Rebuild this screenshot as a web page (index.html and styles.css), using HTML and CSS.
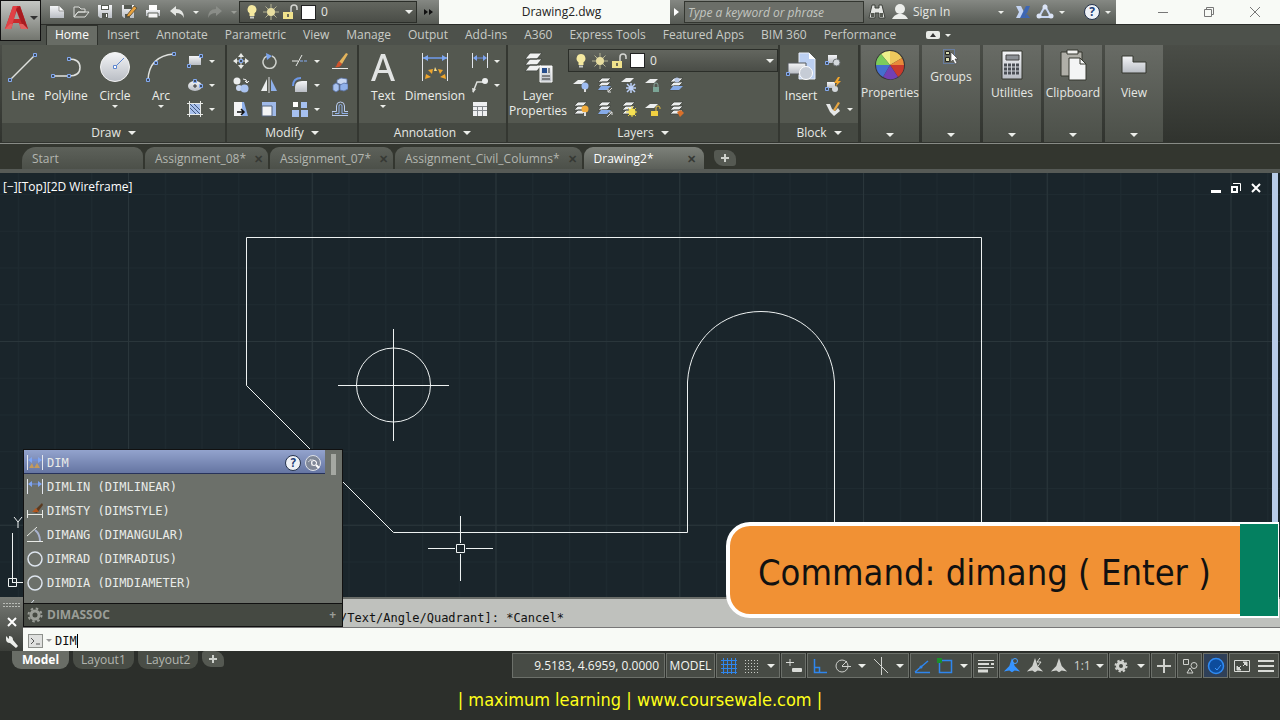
FILE: index.html
```html
<!DOCTYPE html>
<html lang="en">
<head>
    <meta charset="UTF-8">
    <title>Drawing2.dwg</title>
    <link rel="stylesheet" href="styles.css">
</head>
<body>
<svg class="defs" width="0" height="0">
    <defs>
        <linearGradient id="silver" x1="0" y1="0" x2="0" y2="1"><stop offset="0" stop-color="#f4f5f7"/><stop offset="1" stop-color="#b9bdc4"/></linearGradient>
        <symbol id="bulb" viewBox="0 0 16 16"><path d="M8 1a4.500 4.500 0 0 0-2.500 8.200V12h5V9.200A4.500 4.500 0 0 0 8 1z" fill="#f5e9a0"/><path d="M6 12.500h4v2H6z" fill="#c9cbc6"/></symbol>
        <symbol id="sun" viewBox="0 0 16 16"><path d="M8 0v16M0 8h16M2.500 2.500l11 11M13.500 2.500l-11 11" stroke="#b5b493"/><circle cx="8" cy="8" r="4" fill="#e8dea0"/></symbol>
        <symbol id="unlock" viewBox="0 0 16 16"><path d="M9 8V4q0-3 3-3t3 3v2" fill="none" stroke="#d5d6d2" stroke-width="1.500"/><path d="M1 8h10v7H1z" fill="#f0e28c"/><path d="M6 10v3" stroke="#444" stroke-width="1.500"/></symbol>
        <symbol id="sheets" viewBox="0 0 16 16"><path d="M5 1h9l-4 4H1zM5 5h9l-4 4H1zM5 9h9l-4 4H1z" fill="#eceeee" stroke="#41453f" stroke-width=".8"/></symbol>
        <symbol id="dimlines" viewBox="0 0 16 16"><path d="M.5 0v15M15.500 0v15" stroke="#e4e7ee"/><path d="M2 5h12" stroke="#6a8fe8"/><path d="M1 5l4-3v6zM15 5l-4-3v6z" fill="#7fa5f0"/></symbol>
        <symbol id="person" viewBox="0 0 20 20"><path d="M10 1l3 9 6 6-6-1-3 2-3-2-6 1 6-6z" fill="currentColor"/></symbol>
    </defs>
</svg>

<header class="titlebar">
    <button class="app-button" aria-label="Application menu">
        <svg width="26" height="28" viewBox="0 0 26 28"><path d="M1 25L9 2h7l8 23h-7l-2-6H9l-2 6z" fill="#c92a2c"/><path d="M9 2h4l-3 13-3 10H1z" fill="#e04145"/><path d="M16 2l8 23h-4L12 5z" fill="#a81b20"/><path d="M10 15l2.500-8 3 8z" fill="#a3a6a2"/><path d="M1 25l5-5h3l-2 5zM24 25l-5-5h-4l2 5z" fill="#e2605f"/></svg>
        <i class="caret dark"></i>
    </button>
    <div class="quick">
        <button aria-label="New"><svg width="18" height="16"><path d="M2 2h9l5 5v7H2z" fill="url(#silver)"/><path d="M11 2v5h5" fill="#fff" stroke="#999"/></svg></button>
        <button aria-label="Open"><svg width="18" height="16"><path d="M2 13V3h5l2 2h4v3H6zM2 13l4-5h11l-4 5z" fill="#666963" stroke="#dcdedb"/></svg></button>
        <button aria-label="Save"><svg width="18" height="16"><path d="M2 1h14v13H4l-2-2z" fill="url(#silver)"/><path d="M5 1h8v5H5zM6 9h6v5H6z" fill="#555952"/><path d="M6 2h6v3H6zM10 10h1v3h-1z" fill="#fff"/></svg></button>
        <button aria-label="Save as"><svg width="18" height="16"><path d="M2 1h12v13H4l-2-2z" fill="url(#silver)"/><path d="M4 1h8v4H4zM5 10h5v4H5z" fill="#555952"/><path d="M7 11l7-9 3 2-7 8-3 1z" fill="#e9a23e" stroke="#504632" stroke-width=".8"/></svg></button>
        <button aria-label="Plot"><svg width="18" height="16"><path d="M5 1h8v5H5z" fill="#fff"/><path d="M2 6h14v6H2z" fill="url(#silver)"/><path d="M4 9h10v5H4z" fill="#f4f4f4" stroke="#5e625b"/></svg></button>
        <button aria-label="Undo"><svg width="18" height="16"><path d="M2 7l6-5v3q8 0 8 9-2-5-8-5v3z" fill="#e4e6e3"/></svg></button>
        <i class="caret"></i>
        <button aria-label="Redo"><svg width="18" height="16"><path d="M16 7l-6-5v3q-8 0-8 9 2-5 8-5v3z" fill="#8a8d88"/></svg></button>
        <i class="caret dim"></i>
    </div>
    <div class="layer-box quick-layer">
        <svg width="16" height="16"><use href="#bulb"/></svg>
        <svg width="16" height="16"><use href="#sun"/></svg>
        <svg width="16" height="16"><use href="#unlock"/></svg>
        <i class="swatch"></i>
        <select aria-label="Current layer"><option>0</option></select>
        <i class="caret wide"></i>
    </div>
    <button class="more" aria-label="More tools"><svg width="9" height="8"><path d="M0 1l4 3-4 3zM5 1l4 3-4 3z" fill="#111"/></svg></button>
    <h1>Drawing2.dwg</h1>
    <button class="search-toggle" aria-label="Toggle search"><svg width="6" height="10"><path d="M0 1l5 4-5 4z" fill="#fff"/></svg></button>
    <input class="search" type="text" aria-label="Search" placeholder="Type a keyword or phrase">
    <div class="account">
        <button aria-label="Find"><svg width="18" height="18"><path d="M4 2h3v3h4V2h3l3 13h-6v-5H7v5H1z" fill="#e4e6e3" stroke="#3d403b"/><path d="M3 10h3v4H3zM12 10h3v4h-3z" fill="#555952"/></svg></button>
        <button class="sign-in"><svg width="18" height="18"><circle cx="9" cy="6" r="5" fill="#eceeeb"/><path d="M1 16q2-4 6-5h4q4 1 6 5z" fill="#eceeeb"/></svg>Sign In</button>
        <i class="caret"></i>
        <button class="exchange" aria-label="Exchange"><svg width="16" height="16"><path d="M1 2h5l3 6-3 6H1l3-6z" fill="#c3d3f2"/><path d="M15 2h-4L5 14h5zM11 9l4 5h-5z" fill="#3d66b4"/></svg></button>
        <button aria-label="A360"><svg width="18" height="16"><path d="M9 2l6 11H3z" fill="none" stroke="#c7d6f3" stroke-width="2"/><circle cx="9" cy="3" r="2.500" fill="#dbe4f6"/><circle cx="3" cy="12" r="2.500" fill="#dbe4f6"/><circle cx="15" cy="12" r="2.500" fill="#dbe4f6"/></svg></button>
        <i class="caret"></i>
        <button class="help" aria-label="Help">?</button>
        <i class="caret"></i>
    </div>
    <div class="window-buttons">
        <button aria-label="Minimize"><svg width="12" height="12"><path d="M1 6.500h10" stroke="#777"/></svg></button>
        <button aria-label="Restore"><svg width="12" height="12"><path d="M1.500 3.500h7v7h-7zM3.500 3.500v-2h7v7h-2" fill="none" stroke="#777"/></svg></button>
        <button aria-label="Close"><svg width="12" height="12"><path d="M1 1l10 10M11 1L1 11" stroke="#777"/></svg></button>
    </div>
</header>

<nav class="menu">
    <a class="active" href="#">Home</a><a href="#">Insert</a><a href="#">Annotate</a><a href="#">Parametric</a><a href="#">View</a><a href="#">Manage</a><a href="#">Output</a><a href="#">Add-ins</a><a href="#">A360</a><a href="#">Express Tools</a><a href="#">Featured Apps</a><a href="#">BIM 360</a><a href="#">Performance</a>
    <button class="ribbon-toggle" aria-label="Minimize ribbon"><svg width="14" height="8"><rect width="14" height="8" rx="2" fill="#e8eae6"/><path d="M4 6l3-4 3 4z" fill="#333"/></svg><i class="caret"></i></button>
</nav>

<div class="ribbon">
    <section class="panel draw">
        <div class="tools">
            <button class="big w42"><svg width="32" height="32"><path d="M3 29L28 4" stroke="#dfe1de" stroke-width="1.500"/><path d="M1.500 27.500h3v3h-3zM26.500 2.500h3v3h-3z" fill="#3d4a5e" stroke="#84aaf0"/></svg>Line</button>
            <button class="big w46"><svg width="32" height="32"><path d="M3 25h16q11 0 11-8.500T19 8" fill="none" stroke="#dfe1de" stroke-width="1.500"/><path d="M1.500 23.500h3v3h-3zM17.500 23.500h3v3h-3zM17.500 6.500h3v3h-3z" fill="#3d4a5e" stroke="#84aaf0"/></svg>Polyline</button>
            <button class="big w54"><svg width="32" height="32"><circle cx="16" cy="16" r="14.500" fill="url(#silver)" stroke="#f4f4f4"/><path d="M16 16l9-9" stroke="#5d86cf"/><path d="M14.500 14.500h3v3h-3z" fill="#fff" stroke="#5d86cf"/></svg>Circle<i class="caret"></i></button>
            <button class="big w38"><svg width="32" height="32"><path d="M3 29Q4 5 29 3" fill="none" stroke="#dfe1de" stroke-width="1.500"/><path d="M1.500 27.500h3v3h-3zM9.500 10.500h3v3h-3zM27.500 1.500h3v3h-3z" fill="#3d4a5e" stroke="#84aaf0"/></svg>Arc<i class="caret"></i></button>
            <div class="small-grid two">
                <button aria-label="Rectangle"><svg width="16" height="16"><path d="M2 3h12v9H2z" fill="url(#silver)"/><path d="M.500 11.500h3v3h-3zM12.500 1.500h3v3h-3z" fill="#3d4a5e" stroke="#84aaf0"/></svg></button><i class="caret"></i>
                <button aria-label="Ellipse"><svg width="16" height="16"><ellipse cx="8" cy="9" rx="7" ry="5" fill="url(#silver)"/><path d="M8 7v4M6 9h4" stroke="#333"/><path d="M6.500 2.500h3v3h-3zM12.500 7.500h3v3h-3z" fill="#3d4a5e" stroke="#84aaf0"/></svg></button><i class="caret"></i>
                <button aria-label="Hatch"><svg width="16" height="16"><path d="M3 3h10v10H3z" fill="#a8c0ec"/><path d="M3 7l6 6M3 3l10 10M7 3l6 6" stroke="#41587c"/><path d="M0 2.500h16M0 13.500h16M2.500 0v16M13.500 0v16" stroke="#e8eae6"/></svg></button><i class="caret"></i>
            </div>
        </div>
        <button class="panel-title">Draw<i class="caret wide"></i></button>
    </section>

    <section class="panel modify">
        <div class="tools">
            <div class="small-grid five">
                <button aria-label="Move"><svg width="16" height="16"><path d="M8 0l3 4H5zM8 16l-3-4h6zM0 8l4-3v6zM16 8l-4 3V5z" fill="#e9ebe8"/><path d="M8 2v12M2 8h12" stroke="#e9ebe8"/><path d="M6.500 6.500h3v3h-3z" fill="#3d4a5e" stroke="#84aaf0"/></svg></button>
                <button aria-label="Rotate"><svg width="16" height="16"><path d="M11 3a6.500 6.500 0 1 1-5 0" fill="none" stroke="#cfd2cd" stroke-width="1.500"/><path d="M5 0l6 3-5 4z" fill="#7aa4ee"/></svg></button>
                <button class="pad" aria-label="Trim"><svg width="16" height="16"><path d="M0 8h6M4 13L10 2" stroke="#e9ebe8"/><path d="M8 8h8" stroke="#84aaf0" stroke-dasharray="3 1"/></svg></button><i class="caret"></i>
                <button aria-label="Erase"><svg width="16" height="16"><path d="M7 9l7-9 2 1-6 10z" fill="#e3b45c"/><path d="M7 8l3 3q-2 4-7 3 2-1 2-3z" fill="#d0532c"/><path d="M0 15.500h16" stroke="#e9ebe8"/></svg></button>
                <button aria-label="Copy"><svg width="16" height="16"><circle cx="4" cy="4" r="3.500" fill="#eceeee"/><circle cx="6" cy="11" r="3" fill="#c9d6ee"/><circle cx="11.500" cy="11.500" r="4" fill="#a9c2ee"/><path d="M10 2q4 0 4 3m-2-1l2 2 2-2" fill="none" stroke="#eee"/></svg></button>
                <button aria-label="Mirror"><svg width="16" height="16"><path d="M6 2v12H0z" fill="#eceeee"/><path d="M10 2v12h6z" fill="#8fb0ea"/><path d="M8 0v16" stroke="#ddd"/></svg></button>
                <button class="pad" aria-label="Fillet"><svg width="16" height="16"><path d="M3 15V10q0-6 7-6h5v11z" fill="url(#silver)"/><path d="M1 9Q1 1 9 1" fill="none" stroke="#6e98e6" stroke-width="2"/></svg></button><i class="caret"></i>
                <button aria-label="Explode"><svg width="16" height="16"><path d="M5 3l4-2 6 1v4l-5 2-5-2z" fill="#c8d7f2" stroke="#5b74a8" stroke-width=".8"/><path d="M1 8l3-2 3 2v5l-3 2-3-2z" fill="#a9c2ee" stroke="#5b74a8" stroke-width=".8"/><path d="M8 8l4-2 4 1v5l-4 2-4-1z" fill="#8fb0ea" stroke="#5b74a8" stroke-width=".8"/></svg></button>
                <button aria-label="Stretch"><svg width="16" height="16"><path d="M1 1h8v14H1z" fill="#f3f4f5"/><path d="M9 1h2l4 14H9z" fill="#8fb0ea"/><path d="M4 11h7m-3-3l3 3-3 3" fill="none" stroke="#111" stroke-width="1.500"/></svg></button>
                <button aria-label="Scale"><svg width="16" height="16"><path d="M1 1h14v14H1z" fill="#9fb9e8"/><path d="M1 5h10v10H1z" fill="#f3f4f5" stroke="#53627c"/></svg></button>
                <button class="pad" aria-label="Array"><svg width="16" height="16"><path d="M1 1h5v5H1z" fill="#fff"/><path d="M9 1h6v6H9zM0 9h7v7H0zM9 9h7v7H9z" fill="#a5c0f0"/></svg></button><i class="caret"></i>
                <button aria-label="Offset"><svg width="16" height="16"><path d="M0 14.500h16M16 10.500h-3.500V5q0-4-4-4t-4 4v5.500H0V14" fill="none" stroke="#b9cbee"/><path d="M3 12.500h4V5q0-1.500 1.500-1.500T10 5v7.500h6" fill="none" stroke="#8fb0ea"/></svg></button>
            </div>
        </div>
        <button class="panel-title">Modify<i class="caret wide"></i></button>
    </section>

    <section class="panel annotation">
        <div class="tools">
            <button class="big w48"><svg width="32" height="32"><path d="M4 30L14 3h4l10 27h-4l-3-8H11l-3 8zM12 19h8L16 7z" fill="#e2e4e3"/></svg>Text<i class="caret"></i></button>
            <button class="big w56"><svg width="32" height="32"><path d="M3.500 2v28M28.500 2v28" stroke="#e4e6ea"/><path d="M4 7h24" stroke="#6f9bec" stroke-width="1.500"/><path d="M4 7l5-3v6zM28 7l-5-3v6z" fill="#7fa8f2"/><path d="M6 28l1-5 5 3zM9 19l5-1-1 5zM19 18l5 1-3 4zM21 26l5-3 1 5z" fill="#f0a62c"/><path d="M15 20l1-4 2 4z" fill="#ffe28a"/></svg>Dimension</button>
            <div class="small-grid two narrow">
                <button aria-label="Linear dimension"><svg width="16" height="16"><use href="#dimlines"/></svg></button><i class="caret"></i>
                <button aria-label="Leader"><svg width="16" height="16"><path d="M1 15L5 5h7" fill="none" stroke="#dfe1de" stroke-width="1.500"/><path d="M0 11l4 1-3 4z" fill="#dfe1de"/><circle cx="13" cy="4" r="3" fill="#eceeee"/></svg></button><i class="caret"></i>
                <button aria-label="Table"><svg width="16" height="16"><path d="M1 1h14v14H1z" fill="#eff0f1"/><path d="M1 5.500h14M1 9.500h14M5.500 5v10M10.500 5v10" stroke="#84888c"/></svg></button>
            </div>
        </div>
        <button class="panel-title">Annotation<i class="caret wide"></i></button>
    </section>

    <section class="panel layers">
        <div class="tools">
            <button class="big w60"><svg width="32" height="32"><path d="M8 2h12l-5 6H3zM8 8h12l-5 6H3zM8 14h12l-5 6H3z" fill="#f0f1f1" stroke="#474b45"/><path d="M18 15h12v16H18z" fill="url(#silver)" stroke="#fff"/><path d="M20 17h5v5h-5z" fill="#274d8d"/><path d="M27 17v5M20 25h8M20 28h8" stroke="#333"/></svg>Layer<br>Properties</button>
            <div class="layer-side">
                <div class="layer-box">
                    <svg width="16" height="16"><use href="#bulb"/></svg>
                    <svg width="16" height="16"><use href="#sun"/></svg>
                    <svg width="16" height="16"><use href="#unlock"/></svg>
                    <i class="swatch"></i>
                    <select aria-label="Layer"><option>0</option></select>
                    <i class="caret wide"></i>
                </div>
                <div class="layer-grid">
                    <button aria-label="Layer off"><svg width="16" height="16"><path d="M5 3h8l-4 4H0z" fill="#eceeee"/><circle cx="12" cy="9" r="3.500" fill="#9fbdf2"/><path d="M12 12v3" stroke="#ddd" stroke-width="2"/></svg></button>
                    <button aria-label="Isolate"><svg width="16" height="16"><use href="#sheets"/><path d="M4 9h10l-4 4H1z" fill="#86abe8"/><path d="M15 11l-4 4m0-3v3h3" fill="none" stroke="#ddd"/></svg></button>
                    <button aria-label="Freeze"><svg width="16" height="16"><path d="M5 1h8l-4 4H0z" fill="#eceeee"/><path d="M10 6v10M5 11h10M6 7l8 8M14 7l-8 8" stroke="#bcd0f8" stroke-width="1.500"/></svg></button>
                    <button aria-label="Lock layer"><svg width="16" height="16"><path d="M5 2h8l-4 4H0z" fill="#eceeee"/><path d="M9 10V8q0-2 2-2t2 2v2" fill="none" stroke="#8ba69e"/><path d="M8 10h6v5H8z" fill="#7ba596"/></svg></button>
                    <button aria-label="Make current"><svg width="16" height="16"><use href="#sheets"/><path d="M4 9h10l-4 4H1z" fill="#86abe8"/><circle cx="8" cy="3" r="2.500" fill="#b9c9e6"/></svg></button>
                    <button aria-label="Turn all on"><svg width="16" height="16"><use href="#sheets"/><circle cx="12" cy="8" r="3.500" fill="#f3ad3c"/><path d="M12 11v4" stroke="#ddd" stroke-width="2"/></svg></button>
                    <button aria-label="Unisolate"><svg width="16" height="16"><use href="#sheets"/><path d="M4 9h10l-4 4H1z" fill="#86abe8"/><path d="M10 16l5-5m-3 0h3v3" fill="none" stroke="#ddd"/></svg></button>
                    <button aria-label="Thaw"><svg width="16" height="16"><use href="#sheets"/><path d="M11 5v11M5 11h11M7 7l8 8M15 7l-8 8" stroke="#e9d23a"/><circle cx="11" cy="11" r="3.500" fill="#f5e052"/></svg></button>
                    <button aria-label="Unlock layer"><svg width="16" height="16"><path d="M5 3h8l-4 4H0z" fill="#eceeee"/><path d="M11 10V7q0-2 2-2t2 2v1" fill="none" stroke="#e4bd3d"/><path d="M6 10h7v5H6z" fill="#f0cf40"/></svg></button>
                    <button aria-label="Match layer"><svg width="16" height="16"><use href="#sheets"/><path d="M8 11l4-2 3 3-4 4z" fill="#d9702a"/></svg></button>
                </div>
            </div>
        </div>
        <button class="panel-title">Layers<i class="caret wide"></i></button>
    </section>

    <section class="panel block">
        <div class="tools">
            <button class="big w42"><svg width="32" height="32"><path d="M14 2h10l6 6v20H14z" fill="#bcd0f2" stroke="#e9eef8"/><path d="M24 2v6h6" fill="#fff"/><path d="M3 12h18v11H3z" fill="url(#silver)" stroke="#55595d"/><circle cx="21" cy="22" r="6.500" fill="#c6ccd6" stroke="#fff"/><path d="M1.500 21.500h3v3h-3z" fill="#3d4a5e" stroke="#84aaf0"/></svg>Insert</button>
            <div class="small-grid two tight">
                <button aria-label="Create block"><svg width="16" height="16"><path d="M3 2h9v8H3z" fill="url(#silver)"/><circle cx="11.500" cy="9.500" r="3.500" fill="#d4d8dc" stroke="#6d7274"/><path d="M.500 8.500h3v3h-3z" fill="#3d4a5e" stroke="#84aaf0"/></svg></button><i></i>
                <button aria-label="Edit block"><svg width="16" height="16"><path d="M2 5h8v6H2z" fill="url(#silver)"/><circle cx="10" cy="12" r="3" fill="#d4d8dc"/><path d="M13 0L9 6h3l-2 4 6-6h-3l2-4z" fill="#f3a62c"/><path d="M.500 10.500h3v3h-3z" fill="#3d4a5e" stroke="#84aaf0"/></svg></button><i></i>
                <button aria-label="Edit attributes"><svg width="16" height="16"><path d="M1 3h4l2 5 3 2 3-3 2 3-6 5-4-4z" fill="#e6e8e8"/><path d="M8 9l5-8 2 1-5 8z" fill="#e7a640"/></svg></button><i class="caret"></i>
            </div>
        </div>
        <button class="panel-title">Block<i class="caret wide"></i></button>
    </section>

    <div class="folded">
        <button>
            <svg width="32" height="32"><circle cx="16" cy="16" r="15" fill="#333"/><path d="M16 16V2a14 14 0 0 1 12 7z" fill="#efc95d"/><path d="M16 16V2a14 14 0 0 0-9 3z" fill="#eef08b"/><path d="M16 16L28 9a14 14 0 0 1 2 7z" fill="#e98a3a"/><path d="M16 16h14a14 14 0 0 1-6 12z" fill="#c93a2c"/><path d="M16 16l8 12a14 14 0 0 1-15 0z" fill="#7340b4"/><path d="M16 16L9 28a14 14 0 0 1-7-12z" fill="#456fce"/><path d="M16 16H2A14 14 0 0 1 7 5z" fill="#7bcb5c"/></svg>
            Properties<i class="caret wide"></i></button>
        <button>
            <svg width="16" height="16"><path d="M.500 .500h11v14h-11z" fill="none" stroke="#6d93dd" stroke-dasharray="1 1"/><path d="M2.500 2.500h4v3h-4zM2.500 8.500h4v4h-4z" fill="#d9dcb0" stroke="#222"/><path d="M8 3v10l2-2 2 4 2-1-2-4h3z" fill="#fff" stroke="#333" stroke-width=".6"/></svg>
            Groups<i class="caret wide"></i></button>
        <button>
            <svg width="32" height="32"><path d="M6 2h20v28H6z" fill="url(#silver)" stroke="#34372f"/><path d="M10 6h13v5H10z" fill="#8d9196" stroke="#444"/><path d="M8 16h16M8 20h16M8 24h16" stroke="#4a4e54" stroke-width="3" stroke-dasharray="3 1"/></svg>
            Utilities<i class="caret wide"></i></button>
        <button>
            <svg width="32" height="32"><path d="M4 3h21v24H4z" fill="#b0afa8" stroke="#34372f"/><path d="M10 1h11v4H10z" fill="#f2f2f0" stroke="#34372f"/><path d="M12 9h11l6 6v16H12z" fill="#f4f5f5" stroke="#34372f"/><path d="M23 9v6h6" fill="none" stroke="#34372f"/></svg>
            Clipboard<i class="caret wide"></i></button>
        <button>
            <svg width="32" height="32"><path d="M4 7h11v6h13v11H4z" fill="url(#silver)" stroke="#34372f"/></svg>
            View<i class="caret wide"></i></button>
    </div>
</div>

<div class="file-tabs">
    <a class="file start" href="#">Start</a>
    <a class="file" href="#">Assignment_08* <b>✕</b></a>
    <a class="file" href="#">Assignment_07* <b>✕</b></a>
    <a class="file" href="#">Assignment_Civil_Columns* <b>✕</b></a>
    <a class="file current" href="#">Drawing2* <b>✕</b></a>
    <button class="add" aria-label="New drawing"><svg width="10" height="10"><path d="M5 1v8M1 5h8" stroke="#cdd0cb" stroke-width="2"/></svg></button>
</div>

<main class="canvas">
    <svg class="drawing" width="100%" height="100%">
        <defs>
            <pattern id="minor" width="36.750" height="36.750" patternUnits="userSpaceOnUse" x="128" y="168"><path d="M.500 0v36.750M0 .500h36.750" stroke="#1f2b31" fill="none"/></pattern>
            <pattern id="major" width="183.750" height="183.750" patternUnits="userSpaceOnUse" x="128" y="168"><path d="M.500 0v183.750M0 .500h183.750" stroke="#2a363b" fill="none"/></pattern>
        </defs>
        <rect width="100%" height="100%" fill="url(#minor)"/>
        <rect width="100%" height="100%" fill="url(#major)"/>
        <g fill="none" stroke="#eef2f2">
            <path d="M981.500 424V64.500H246.500V212.500L393.500 359.500H687.500V209C690 166 722 138.500 761 138.500S832 166 834.500 209V424"/>
            <circle cx="393.500" cy="212" r="37"/>
            <path d="M338 212.500h111M393.500 156v112"/>
            <path d="M428 375.500h27M466 375.500h27M460.500 343v27M460.500 381v27M456.500 371.500h8v8h-8z"/>
            <path d="M12.500 360v49M8.500 405.500h8v8h-8zM12 409.500h12M14 344l4 5 4-5M18 349v6"/>
        </g>
    </svg>
    <div class="view-label">[−][Top][2D Wireframe]</div>
    <div class="view-buttons">
        <button aria-label="Minimize view"><svg width="10" height="10"><path d="M0 8.500h10" stroke="#fff" stroke-width="3"/></svg></button>
        <button aria-label="Restore view"><svg width="10" height="10"><path d="M1 4h5v5H1z" fill="none" stroke="#fff" stroke-width="2"/><path d="M2 .500h7.500V8" fill="none" stroke="#fff"/></svg></button>
        <button aria-label="Close view"><svg width="10" height="10"><path d="M1 1l8 8M9 1L1 9" stroke="#fff" stroke-width="2"/></svg></button>
    </div>
    <div class="scroll-edge"></div>
</main>

<section class="command">
    <div class="grip">
        <svg width="18" height="6"><path d="M0 1.500h18M0 4.500h18" stroke="#b9bcb7" stroke-dasharray="2 1"/></svg>
        <button aria-label="Close command line"><svg width="10" height="10"><path d="M1 1l8 8M9 1L1 9" stroke="#fff" stroke-width="2"/></svg></button>
        <button aria-label="Customize"><svg width="14" height="14"><path d="M1 1l3 3V1q4 0 4 4l5 6-2 2-6-5Q1 8 1 4z" fill="#eceeeb"/></svg></button>
    </div>
    <div class="console">
        <div class="history">/Text/Angle/Quadrant]: *Cancel*</div>
        <div class="prompt">
            <svg width="16" height="14"><rect x=".500" y=".500" width="14" height="13" fill="#dfe0de" stroke="#8d908b"/><path d="M3 4l3 3-3 3M8 10h4" fill="none" stroke="#555"/></svg>
            <i class="caret grey"></i>
            <input type="text" aria-label="Command" value="DIM"><span class="cursor"></span>
        </div>
    </div>
    <div class="suggest">
        <div class="suggest-body">
            <ul>
                <li class="selected"><svg width="16" height="16"><use href="#dimlines"/><path d="M2 13l3-5 2 5 3-5 3 5z" fill="#c39a5c"/></svg><span>DIM</span>
                    <button class="help" aria-label="Help">?</button>
                    <button class="help web" aria-label="Search on internet"><svg width="14" height="14"><path d="M2 6q5-5 9 1M4 3q3 3 2 7" fill="none" stroke="#c7cbd2"/><circle cx="8" cy="7" r="2.500" fill="none" stroke="#fff"/><path d="M10 9l3 3" stroke="#fff" stroke-width="2"/></svg></button></li>
                <li><svg width="16" height="16"><use href="#dimlines"/></svg><span>DIMLIN (DIMLINEAR)</span></li>
                <li><svg width="16" height="16"><path d="M.500 7v8M15.500 7v8M1 11.500h14" stroke="#e8eae6"/><path d="M6 9l5-5 4-4 1 2-6 8z" fill="#5a3a20"/><path d="M5 9l4-4 3 4z" fill="#b3571f"/></svg><span>DIMSTY (DIMSTYLE)</span></li>
                <li><svg width="16" height="16"><path d="M0 14.500h16M0 9l10-9" stroke="#e8eae6"/><path d="M8 3q5 4 5 11" fill="none" stroke="#a9b3d0" stroke-width="2"/></svg><span>DIMANG (DIMANGULAR)</span></li>
                <li><svg width="16" height="16"><circle cx="8" cy="8" r="7" fill="none" stroke="#dde4ee" stroke-width="1.500"/></svg><span>DIMRAD (DIMRADIUS)</span></li>
                <li><svg width="16" height="16"><circle cx="8" cy="8" r="7" fill="none" stroke="#dde4ee" stroke-width="1.500"/></svg><span>DIMDIA (DIMDIAMETER)</span></li>
                <li><svg width="16" height="16"><path d="M1 8l6-7" stroke="#dde4ee"/></svg></li>
            </ul>
            <div class="thumb"></div>
        </div>
        <button class="suggest-more">
            <svg width="16" height="16"><circle cx="8" cy="8" r="4" fill="none" stroke="#9a9d97" stroke-width="3"/><circle cx="8" cy="8" r="6.500" fill="none" stroke="#9a9d97" stroke-width="2" stroke-dasharray="2.500 2.600"/></svg>
            DIMASSOC <span>+</span></button>
    </div>
    <div class="banner"><p>Command: dimang ( Enter )</p><div class="stripe"></div></div>
</section>

<div class="bottom">
    <nav class="layouts">
        <a class="current" href="#">Model</a><a href="#">Layout1</a><a href="#">Layout2</a>
        <button class="add" aria-label="New layout"><svg width="10" height="10"><path d="M5 1v8M1 5h8" stroke="#cdd0cb" stroke-width="2"/></svg></button>
    </nav>
    <div class="status">
        <div class="cell coords">9.5183, 4.6959, 0.0000</div>
        <button class="cell model">MODEL</button>
        <div class="cell">
            <button aria-label="Grid"><svg width="16" height="16"><path d="M2.500 0v16M6.500 0v16M10.500 0v16M14.500 0v16M0 2.500h16M0 6.500h16M0 10.500h16M0 14.500h16" stroke="#2f86ee"/></svg></button>
            <button aria-label="Snap"><svg width="16" height="16"><path d="M1 2.500h14M1 5.500h14M1 8.500h14M1 11.500h14M1 14.500h14" stroke="#c9ccc7" stroke-dasharray="1 2"/></svg></button>
            <i class="caret wide"></i>
        </div>
        <div class="cell w26"><button aria-label="Dynamic input"><svg width="16" height="16"><path d="M4 1v7M0 4.500h8" stroke="#d9dbd7"/><rect x="6" y="10" width="10" height="4" rx="1" fill="#d9dbd7"/></svg></button></div>
        <div class="cell wide-cell">
            <button aria-label="Ortho"><svg width="16" height="16"><path d="M2.500 1v13.500H15M3 9.500h4.500V14" fill="none" stroke="#2f86ee" stroke-width="1.500"/></svg></button>
            <button aria-label="Polar"><svg width="16" height="16"><circle cx="7" cy="8" r="6" fill="none" stroke="#cfd1cd"/><path d="M7 8.500h9M7 8l5-5" stroke="#cfd1cd"/></svg></button>
            <i class="caret wide"></i>
            <button aria-label="Isodraft"><svg width="16" height="18"><path d="M8.500 0v18" stroke="#cfd1cd"/><path d="M1 2l14 14" stroke="#cfd1cd"/></svg></button>
            <i class="caret wide"></i>
        </div>
        <div class="cell w64">
            <button aria-label="Tracking"><svg width="16" height="16"><path d="M1 14.500h15M1 14L14 3" stroke="#2f86ee" stroke-width="1.500"/><circle cx="7" cy="9" r="1.500" fill="#2f86ee"/></svg></button>
            <button aria-label="Object snap"><svg width="16" height="16"><path d="M2.500 2.500h12v12h-12z" fill="none" stroke="#2f86ee" stroke-width="1.500"/><path d="M0 0h5v5H0z" fill="#1c8e2c"/></svg></button>
            <i class="caret wide"></i>
        </div>
        <div class="cell w26"><button aria-label="Lineweight"><svg width="16" height="14"><path d="M0 1.500h16" stroke="#d9dbd7"/><path d="M0 5h11M13 5h3" stroke="#d9dbd7" stroke-width="2"/><path d="M0 8.500h16" stroke="#d9dbd7"/><path d="M0 12h10" stroke="#d9dbd7" stroke-width="3"/></svg></button></div>
        <div class="cell scale-cell">
            <button class="on" aria-label="Annotation visibility"><svg width="18" height="18"><use href="#person"/><circle cx="12" cy="4" r="2.500" fill="none" stroke="#49a0ff"/></svg></button>
            <button aria-label="Auto scale"><svg width="18" height="18"><use href="#person"/><path d="M14 1l-3 4h4l-3 4" fill="none" stroke="#d9dbd7"/></svg></button>
            <button class="scale"><svg width="18" height="18"><use href="#person"/></svg>1:1</button>
            <i class="caret wide"></i>
        </div>
        <div class="cell w40">
            <button aria-label="Workspace"><svg width="14" height="14"><circle cx="7" cy="7" r="3.500" fill="none" stroke="#cfd1cd" stroke-width="3"/><circle cx="7" cy="7" r="5.500" fill="none" stroke="#cfd1cd" stroke-width="2" stroke-dasharray="2.300 2"/></svg></button>
            <i class="caret wide"></i>
        </div>
        <div class="cell w26"><button aria-label="Monitor"><svg width="14" height="14"><path d="M7 0v14M0 7h14" stroke="#cfd1cd" stroke-width="2"/></svg></button></div>
        <div class="cell w26"><button aria-label="Isolate objects"><svg width="16" height="16"><path d="M1.500 1.500h5v5h-5zM5 15l3-5 3 5z" fill="none" stroke="#cfd1cd"/><circle cx="12" cy="7.500" r="3" fill="none" stroke="#cfd1cd"/></svg></button></div>
        <div class="cell w26 lit"><button aria-label="Hardware acceleration"><svg width="18" height="18"><circle cx="9" cy="9" r="7.500" fill="#0d4c9c" stroke="#2f8bf4" stroke-width="1.500"/><path d="M8 11l2 2 4-5" fill="none" stroke="#3b96ff"/></svg></button></div>
        <div class="cell w50">
            <button aria-label="Clean screen"><svg width="16" height="14"><path d="M.500 1.500h15v11H.500z" fill="none" stroke="#d9dbd7"/><path d="M3 11V7l4 4zM13 3v4L9 3zM4 10l3-3M12 4L9 7" fill="#d9dbd7" stroke="#d9dbd7"/></svg></button>
            <button aria-label="Customization"><svg width="16" height="14"><path d="M0 2h16M0 7h16M0 12h16" stroke="#d9dbd7" stroke-width="2"/></svg></button>
        </div>
    </div>
</div>

<footer>| maximum learning | www.coursewale.com |</footer>
</body>
</html>
```
FILE: styles.css
```css
*{box-sizing:border-box;}
body{
    margin:0;
    min-height:100vh;
    display:flex;
    flex-direction:column;
    background:#2c2f2b;
    color:#e6e8e4;
    font:12px/16px "Open Sans","Noto Sans",sans-serif;
}
.defs{position:absolute;}
button,input,select{
    margin:0;
    padding:0;
    border:0;
    background:none;
    color:inherit;
    font:inherit;
}
a{color:inherit;text-decoration:none;}
svg{display:block;flex:none;}
.caret{
    flex:none;
    width:0;
    height:0;
    border:3px solid transparent;
    border-top:3px solid #eceeea;
    border-bottom:0;
}
.caret.wide{border-width:4px 4px 0;}
.caret.dim{border-top-color:#999c96;}
.caret.dark{border-top-color:#333;border-width:4px 4px 0;}
.caret.grey{border-top-color:#999;}

/* title bar */
.titlebar{
    position:relative;
    display:flex;
    align-items:center;
    height:25px;
    padding-left:48px;
    background:linear-gradient(#858883,#565a54);
    border-bottom:1px solid #2a2c28;
}
.app-button{
    position:absolute;
    z-index:2;
    left:0;
    top:0;
    width:41px;
    height:41px;
    display:flex;
    align-items:center;
    justify-content:center;
    padding-bottom:6px;
    border:1px solid #111;
    background:linear-gradient(#c4c6c3,#73766f);
}
.quick{display:flex;align-items:center;width:191px;gap:6px;}
.quick .caret{margin:0 1px;}
.layer-box{
    display:flex;
    align-items:center;
    height:22px;
    padding:0 3px 0 4px;
    gap:3px;
    background:linear-gradient(#63665f,#4a4d47);
    border:1px solid #2b2e29;
}
.layer-box select{flex:1;padding-left:2px;appearance:none;}
.quick-layer{width:178px;}
.swatch{width:15px;height:15px;background:#fff;border:1px solid #222;}
.more{width:22px;height:24px;display:flex;align-items:center;justify-content:center;}
.titlebar h1{
    flex:1;
    margin:0;
    padding-left:14px;
    background:#f8faf6;
    color:#222;
    font-size:12px;
    font-weight:400;
    line-height:24px;
    text-align:center;
}
.search-toggle{width:14px;height:24px;display:flex;align-items:center;justify-content:center;}
.search{
    width:180px;
    height:22px;
    padding:0 3px;
    background:#6b6e68;
    border:1px solid #333630;
    font-style:italic;
}
.search::placeholder{color:#c3c6c0;}
.account{display:flex;align-items:center;width:252px;padding:0 5px 0 4px;gap:5px;}
.sign-in{flex:1;display:flex;align-items:center;gap:4px;}
.exchange{padding-left:6px;}
.help{
    width:16px;
    height:16px;
    border:1px solid #24324c;
    border-radius:50%;
    background:#eef1f6;
    color:#1f3f78;
    font-size:12px;
    font-weight:700;
    line-height:14px;
    text-align:center;
}
.account .help{margin-left:14px;}
.window-buttons{
    width:164px;
    height:24px;
    display:flex;
    align-items:center;
    justify-content:space-between;
    padding:0 19px 0 41px;
    background:#f8faf6;
}

/* ribbon tabs */
.menu{
    display:flex;
    align-items:stretch;
    height:20px;
    padding-left:46px;
    background:#4d514b;
    color:#c9ccc7;
    line-height:20px;
}
.menu a{padding:0 8px 0 9px;white-space:nowrap;}
.menu .active{padding:0 8px;background:#686c65;color:#fff;border:1px solid #2f322d;border-bottom:0;line-height:18px;}
.ribbon-toggle{display:flex;align-items:center;gap:5px;padding-left:22px;}

.ribbon{
    display:flex;
    height:99px;
    padding:0 2px 1px;
    background:linear-gradient(#4a4d47,#30332e);
    border-bottom:1px solid #888b86;
}
.panel{
    flex:none;
    display:flex;
    flex-direction:column;
    background:#545850;
    border-right:2px solid #343731;
}
.draw{width:225px;}
.modify{width:132px;}
.annotation{width:149px;}
.layers{width:272px;}
.block{width:80px;}
.tools{display:flex;flex:1;padding-top:4px;}
.big{
    display:flex;
    flex-direction:column;
    align-items:center;
    color:#eceeea;
    line-height:15px;
}
.big svg{margin:2px 0 5px;}
.big .caret,.folded .caret{margin-top:2px;}
.w38{width:38px;}
.w42{width:42px;}
.w46{width:44px;}
.w48{width:48px;}
.w54{width:54px;}
.w56{width:56px;}
.w60{width:60px;}
.small-grid{
    display:grid;
    grid-auto-rows:24px;
    align-items:center;
    justify-items:center;
}
.two{grid-template-columns:22px 12px;margin-left:4px;}
.two.narrow{grid-template-columns:26px 8px;margin-left:4px;}
.two.tight{grid-template-columns:22px 12px;margin-left:0;}
.five{grid-template-columns:28px 28px 30px 8px 38px;}
.five .pad{padding-left:4px;}
.panel-title{
    display:flex;
    align-items:center;
    justify-content:center;
    gap:7px;
    height:19px;
    background:#454942;
}
.layer-side{flex:1;}
.layer-grid{
    display:grid;
    grid-template-columns:repeat(5,24px);
    grid-auto-rows:24px;
    align-items:center;
    justify-items:center;
    margin-left:1px;
}
.layer-side .layer-box{height:23px;margin-bottom:1px;}
.folded{display:flex;gap:3px;padding-left:1px;}
.folded button{
    display:flex;
    flex-direction:column;
    align-items:center;
    width:58px;
    padding:4px 0 5px;
    background:linear-gradient(#686b65,#4c5049);
}
.folded svg{margin-bottom:4px;}
.folded .caret{margin-top:auto;}

/* drawing tabs */
.file-tabs{
    display:flex;
    align-items:flex-end;
    height:29px;
    padding:3px 0 0 22px;
    background:#33362f;
    border-bottom:4px solid #565a56;
    color:#b3b6b0;
}
.file{
    display:flex;
    align-items:center;
    gap:8px;
    height:22px;
    margin-right:2px;
    padding:2px 5px 0 10px;
    background:linear-gradient(#5d615a,#4c5049);
    border-radius:9px 9px 0 0;
    white-space:nowrap;
}
.file b{color:#363934;font-size:11px;}
.start{width:121px;border-radius:14px 9px 0 0;}
.file.current{width:120px;padding-right:8px;justify-content:space-between;background:linear-gradient(#7d817a,#5b5f59);color:#fff;}
.add{
    display:flex;
    align-items:center;
    justify-content:center;
    width:22px;
    height:16px;
    background:#555952;
    border-radius:3px 9px 3px 9px;
}
.file-tabs .add{align-self:center;margin-left:8px;}

/* model space */
.canvas{
    position:relative;
    flex:1;
    min-height:424px;
    display:flex;
    justify-content:space-between;
    align-items:flex-start;
    padding:6px 19px 0 3px;
    background:#1a252b;
    overflow:hidden;
}
.drawing{position:absolute;left:0;top:0;}
.view-label,.view-buttons{position:relative;color:#fff;}
.view-buttons{display:flex;gap:10px;padding-top:4px;}
.scroll-edge{position:absolute;right:2px;top:0;bottom:0;width:6px;background:#b7cbe8;}

/* command line */
.command{position:relative;display:flex;height:54px;}
.grip{
    width:23px;
    display:flex;
    flex-direction:column;
    align-items:center;
    justify-content:space-between;
    padding:5px 0 2px;
    background:linear-gradient(#777a75,#3b3e39);
}
.console{flex:1;display:flex;flex-direction:column;color:#111;}
.console,.suggest{font-family:"DejaVu Sans Mono","Liberation Mono",monospace;}
.history{
    height:30px;
    padding:12px 0 0 317px;
    background:#bfc1bd;
    border-top:2px solid #6a6d69;
    line-height:14px;
}
.prompt{
    flex:1;
    display:flex;
    align-items:center;
    padding:2px 0 0 5px;
    background:#f8faf6;
    border-top:1px solid #777;
}
.prompt .caret{margin:0 3px 0 2px;}
.prompt input{width:22px;height:16px;}
.cursor{width:1px;height:14px;background:#000;}
.suggest{
    position:absolute;
    left:23px;
    bottom:24px;
    width:320px;
    border:1px solid #111;
    background:#6c706a;
    color:#e9ebe8;
}
.suggest-body{display:flex;height:153px;overflow:hidden;}
.suggest ul{flex:1;margin:0;padding:0;list-style:none;}
.suggest li{display:flex;align-items:center;gap:4px;height:24px;padding:2px 3px 0;}
.suggest li span{flex:1;}
.suggest .selected{padding-right:4px;background:linear-gradient(#93a3cd,#6575a2);border-bottom:1px solid #27325a;}
.suggest .web{background:#7f8797;border-color:#dde1e9;}
.thumb{width:5px;height:21px;margin:4px 6px 0;background:#a5a8a2;}
.suggest-more{
    display:flex;
    align-items:center;
    gap:4px;
    width:100%;
    height:23px;
    padding:0 6px 0 3px;
    background:#454942;
    border-top:1px solid #111;
    color:#9a9d97;
    font-family:"Open Sans","Noto Sans",sans-serif;
    font-weight:700;
}
.suggest-more span{margin-left:auto;}
.banner{
    position:absolute;
    right:1px;
    bottom:33px;
    width:553px;
    height:96px;
    display:flex;
    align-items:stretch;
    background:#f19134;
    border:4px solid #fff;
    border-right-width:1px;
    border-radius:24px 0 0 24px;
    color:#111;
}
.banner p{
    flex:1;
    margin:0;
    padding:2px 0 0 28px;
    font:36px/90px "DejaVu Sans Condensed","DejaVu Sans",sans-serif;
    white-space:nowrap;
}
.stripe{width:38px;margin:-2px 0;background:#048060;}

/* layout tabs and status bar */
.bottom{display:flex;justify-content:space-between;align-items:flex-start;height:27px;}
.layouts{display:flex;padding-left:12px;gap:4px;color:#b3b6b0;}
.layouts a{
    padding:0 8px;
    line-height:18px;
    background:#494d46;
    border-radius:0 0 9px 9px;
}
.layouts .current{padding:0 10px;background:#696d66;color:#fff;font-weight:700;}
.status{display:flex;gap:1px;padding:2px 1px 0 0;}
.cell{
    display:flex;
    align-items:center;
    justify-content:space-around;
    height:25px;
    width:64px;
    background:#474b45;
    border:1px solid #6c706a;
    color:#f3f5f1;
    white-space:nowrap;
}
.coords{width:153px;padding-right:5px;justify-content:flex-end;}
.model{width:49px;}
.w26{width:25px;}
.w40{width:41px;}
.w50{width:50px;}
.w64{width:62px;}
.wide-cell{width:102px;}
.scale-cell{width:109px;}
.scale{display:flex;align-items:center;gap:6px;}
.cell button{color:#cfd1cd;}
.cell .on{color:#3593ff;}
.lit{background:#2f4058;}

footer{
    height:42px;
    color:#ffff1a;
    font:18px/44px "DejaVu Sans Condensed","DejaVu Sans",sans-serif;
    text-align:center;
}
```
